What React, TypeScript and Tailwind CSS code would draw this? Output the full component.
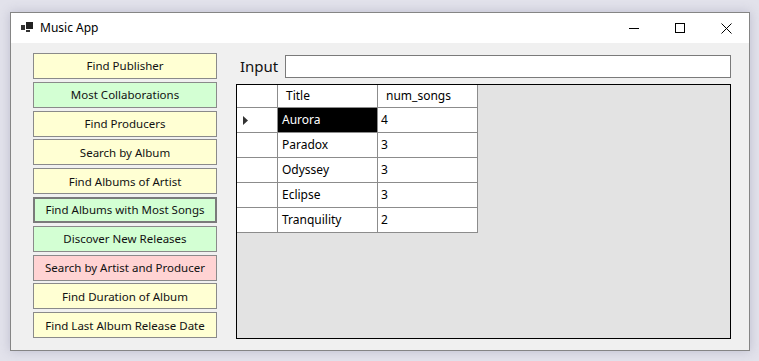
import React from "react";

const buttons = [
    { label: "Find Publisher", color: "bg-[#ffffd3]" },
    { label: "Most Collaborations", color: "bg-[#d3ffd3]" },
    { label: "Find Producers", color: "bg-[#ffffd3]" },
    { label: "Search by Album", color: "bg-[#ffffd3]" },
    { label: "Find Albums of Artist", color: "bg-[#ffffd3]" },
    { label: "Find Albums with Most Songs", color: "bg-[#d3ffd3]", focused: true },
    { label: "Discover New Releases", color: "bg-[#d3ffd3]" },
    { label: "Search by Artist and Producer", color: "bg-[#ffd3d3]" },
    { label: "Find Duration of Album", color: "bg-[#ffffd3]" },
    { label: "Find Last Album Release Date", color: "bg-[#ffffd3]" },
];

const rows = [
    { title: "Aurora", num: "4" },
    { title: "Paradox", num: "3" },
    { title: "Odyssey", num: "3" },
    { title: "Eclipse", num: "3" },
    { title: "Tranquility", num: "2" },
];

function AppIcon() {
    return (
        <svg width="12" height="12" viewBox="0 0 12 12" className="shrink-0">
            <rect x="0" y="3" width="4" height="5" fill="#333" />
            <rect x="5" y="0" width="7" height="7" fill="#222" />
            <rect x="5" y="8" width="4" height="2" fill="#333" />
        </svg>
    );
}

export default function App() {
    return (
        <div
            className="w-[759px] h-[361px] bg-[#e2e2eb] pt-[12px] pl-[10px]"
            style={{ fontFamily: '"Noto Sans", "Open Sans", sans-serif' }}
        >
            <div className="w-[740px] h-[339px] border border-[#858585] bg-[#f0f0f0] flex flex-col shadow-[0_0_10px_rgba(80,80,120,0.25)]">
                {/* title bar */}
                <div className="h-[30px] bg-white flex items-center pl-[10px]">
                    <AppIcon />
                    <span className="ml-[7px] text-[12px] text-black">Music App</span>
                    <div className="ml-auto flex items-center h-full">
                        <div className="w-[46px] h-full flex items-center justify-center">
                            <div className="w-[10px] h-px bg-black" />
                        </div>
                        <div className="w-[46px] h-full flex items-center justify-center">
                            <div className="w-[10px] h-[10px] border border-black" />
                        </div>
                        <div className="w-[46px] h-full flex items-center justify-center">
                            <svg width="11" height="11" viewBox="0 0 11 11">
                                <path d="M0.5 0.5 L10.5 10.5 M10.5 0.5 L0.5 10.5" stroke="#000" strokeWidth="1" />
                            </svg>
                        </div>
                    </div>
                </div>

                {/* body */}
                <div className="flex-1 flex pl-[22px] pt-[10px]">
                    <div className="w-[184px] flex flex-col gap-[2.8px]">
                        {buttons.map((b) => (
                            <div
                                key={b.label}
                                className={`h-[26px] flex items-center justify-center text-[11.5px] text-[#111] ${b.color} ${
                                    b.focused ? "border-2 border-[#7a7a7a]" : "border border-[#8a8a8a]"
                                }`}
                            >
                                {b.label}
                            </div>
                        ))}
                    </div>

                    <div className="ml-[19px] w-[495px] flex flex-col">
                        <div className="flex items-center h-[23px] mt-[2px]">
                            <span className="ml-[4px] text-[15px] text-[#111] w-[45px]">Input</span>
                            <div className="w-[446px] h-[23px] bg-white border border-[#7a7a7a]" />
                        </div>

                        <div className="mt-[6px] h-[255px] border border-black bg-[#e3e3e3] flex flex-col items-start text-[12px]">
                            <div className="flex h-[23px] bg-white">
                                <div className="w-[41px] border-r border-b border-[#8c8c8c]" />
                                <div className="w-[100px] border-r border-b border-[#8c8c8c] flex items-center pl-[8px]">
                                    Title
                                </div>
                                <div className="w-[100px] border-r border-b border-[#8c8c8c] flex items-center pl-[8px]">
                                    num_songs
                                </div>
                            </div>
                            {rows.map((r, i) => (
                                <div key={r.title} className="flex h-[25px] bg-white">
                                    <div className="w-[41px] border-r border-b border-[#8c8c8c] flex items-center pl-[6px]">
                                        {i === 0 && (
                                            <svg width="5" height="9" viewBox="0 0 5 9">
                                                <path d="M0 0 L5 4.5 L0 9 Z" fill="#333" />
                                            </svg>
                                        )}
                                    </div>
                                    <div
                                        className={`w-[100px] border-r border-b border-[#8c8c8c] flex items-center pl-[4px] ${
                                            i === 0 ? "bg-black text-white" : "text-black"
                                        }`}
                                    >
                                        {r.title}
                                    </div>
                                    <div className="w-[100px] border-r border-b border-[#8c8c8c] flex items-center pl-[3px] text-black">
                                        {r.num}
                                    </div>
                                </div>
                            ))}
                        </div>
                    </div>
                </div>
            </div>
        </div>
    );
}
